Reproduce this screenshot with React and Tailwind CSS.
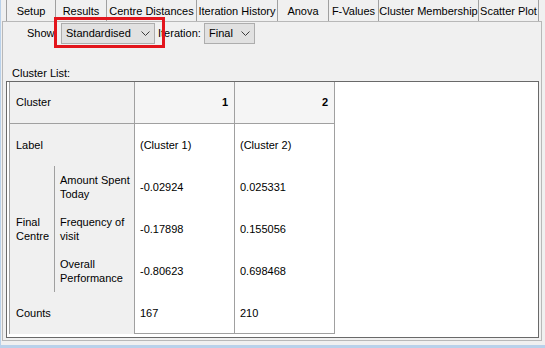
import React from "react";

const TABS = [
  { label: "Setup", w: "w-[49px]" },
  { label: "Results", w: "w-[51px]" },
  { label: "Centre Distances", w: "w-[90px]" },
  { label: "Iteration History", w: "w-[81px]" },
  { label: "Anova", w: "w-[51px]" },
  { label: "F-Values", w: "w-[50px]" },
  { label: "Cluster Membership", w: "w-[100px]" },
  { label: "Scatter Plot", w: "w-[61px] border-r" },
];

const Chevron = () => (
  <svg width="9" height="5" viewBox="0 0 9 5" className="shrink-0">
    <polyline points="0.5,0.5 4.5,4.5 8.5,0.5" fill="none" stroke="#3c3c3c" strokeWidth="1" />
  </svg>
);

const Select = ({ value, width }) => (
  <div
    className={`${width} h-[21px] flex items-center justify-between border border-[#adadad] bg-[#e1e1e1] pl-[4px] pr-[4px]`}
  >
    <span className="leading-none">{value}</span>
    <Chevron />
  </div>
);

const ROWS = [
  { sub: ["Amount Spent", "Today"], a: "-0.02924", b: "0.025331" },
  { sub: ["Frequency of", "visit"], a: "-0.17898", b: "0.155056" },
  { sub: ["Overall", "Performance"], a: "-0.80623", b: "0.698468" },
];

const ClusterGrid = () => {
  return (
    <div className="grid grid-cols-[45px_80px_100px_100px] grid-rows-[42px_42px_42px_42px_42px_42px] w-[326px] h-[252px] border-l border-b border-[#a0a0a0]">
      {/* header */}
      <div className="col-span-2 flex items-center pl-[6px] bg-[#f0f0f0] border-r border-b border-[#a0a0a0]">
        Cluster
      </div>
      <div className="flex items-center justify-end pr-[6px] font-bold bg-[#f5f5f5] border-r border-b border-[#a0a0a0]">
        1
      </div>
      <div className="flex items-center justify-end pr-[6px] font-bold bg-[#f5f5f5] border-r border-b border-[#a0a0a0]">
        2
      </div>

      {/* label */}
      <div className="col-span-2 flex items-center pl-[6px] bg-[#f0f0f0] border-r border-[#a0a0a0]">
        Label
      </div>
      <div className="flex items-center pl-[5px] border-r border-[#a0a0a0]">(Cluster 1)</div>
      <div className="flex items-center pl-[5px] border-r border-[#a0a0a0]">(Cluster 2)</div>

      {/* final centre */}
      <div className="row-span-3 flex items-center pl-[6px] bg-[#f0f0f0] border-r border-[#a0a0a0] leading-[14px]">
        <span>
          Final
          <br />
          Centre
        </span>
      </div>
      {ROWS.map((row, i) => (
        <React.Fragment key={i}>
          <div className="col-start-2 flex items-center pl-[5px] bg-[#f0f0f0] border-r border-[#a0a0a0] leading-[14px]">
            <span>
              {row.sub[0]}
              <br />
              {row.sub[1]}
            </span>
          </div>
          <div className="flex items-center pl-[5px] border-r border-[#a0a0a0]">{row.a}</div>
          <div className="flex items-center pl-[5px] border-r border-[#a0a0a0]">{row.b}</div>
        </React.Fragment>
      ))}

      {/* counts */}
      <div className="col-span-2 flex items-center pl-[6px] bg-[#f0f0f0] border-r border-[#a0a0a0]">
        Counts
      </div>
      <div className="flex items-center pl-[5px] border-r border-[#a0a0a0]">167</div>
      <div className="flex items-center pl-[5px] border-r border-[#a0a0a0]">210</div>
    </div>
  );
};

const App = () => {
  return (
    <div className="relative w-[545px] h-[348px] overflow-hidden flex flex-col bg-[#f0f0f0] border-l border-[#b9d1ea] text-[11px] text-black font-['Liberation_Sans',Arial,sans-serif]">
      <div className="flex flex-col pl-[1px] pr-[3px]">
        {/* tabs */}
        <div className="h-[21px] flex pl-[4px]">
          {TABS.map((tab) => (
            <div
              key={tab.label}
              className={`${tab.w} h-[24px] -mt-[3px] pt-[3px] flex items-center justify-center whitespace-nowrap border-l border-t border-[#a0a0a0] rounded-t-[3px] bg-[#f0f0f0]`}
            >
              {tab.label}
            </div>
          ))}
        </div>

        {/* panel */}
        <div className="h-[320px] flex flex-col border border-[#b8b8b8]">
          <div className="mt-[1px] h-[21px] flex items-center pl-[24px]">
            <span className="w-[34px]">Show</span>
            <Select value="Standardised" width="w-[94px]" />
            <span className="ml-[3px] w-[46px] whitespace-nowrap">Iteration:</span>
            <Select value="Final" width="w-[51px]" />
          </div>

          <div className="mt-[22px] h-[14px] leading-[14px] pl-[9px]">Cluster List:</div>

          <div className="mt-[1px] ml-[3px] w-[533px] h-[257px] border border-[#696969] bg-white pl-[2px]">
            <ClusterGrid />
          </div>
        </div>
      </div>

      <div className="h-[4px]" />
      <div className="h-[3px] bg-[#b9d1ea]" />

      {/* highlight box over the Show select */}
      <div className="absolute left-[53px] top-[17px] w-[111px] h-[31px] border-[3px] border-[#e3151c] pointer-events-none" />
    </div>
  );
};

export default App;
